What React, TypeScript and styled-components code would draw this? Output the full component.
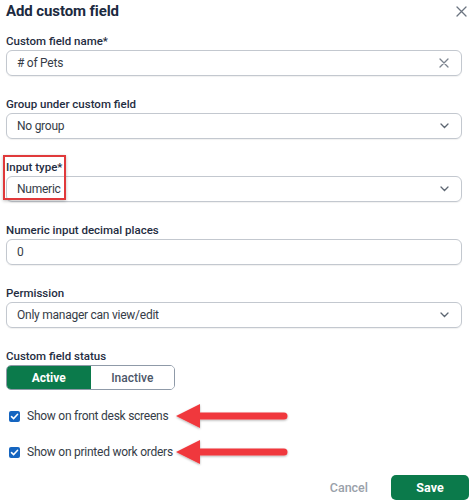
import styled, { createGlobalStyle } from 'styled-components'

const GlobalStyle = createGlobalStyle`
  html, body {
    margin: 0;
    padding: 0;
    background: #ffffff;
  }
  body {
    font-family: Roboto, 'Liberation Sans', sans-serif;
    color: #353c47;
  }
`

const Dialog = styled.div`
  position: relative;
  width: 474px;
  height: 504px;
  box-sizing: border-box;
  padding: 0 5px 0 6px;
  display: flex;
  flex-direction: column;
  overflow: hidden;
`

const Header = styled.div`
  display: flex;
  align-items: center;
  justify-content: space-between;
  height: 22px;
`

const Title = styled.h2`
  margin: 0;
  font-size: 15px;
  font-weight: 700;
  color: #1c2a40;
  line-height: 22px;
  letter-spacing: -0.1px;
`

const CloseButton = styled.button`
  border: 0;
  background: none;
  padding: 0;
  width: 14px;
  height: 14px;
  margin-right: 1px;
  display: flex;
  align-items: center;
  justify-content: center;
`

const Fields = styled.div`
  display: flex;
  flex-direction: column;
  gap: 20px;
  margin-top: 11px;
  margin-right: 7px;
`

const Field = styled.div`
  position: relative;
  display: flex;
  flex-direction: column;
  gap: 1px;
`

const Label = styled.label`
  font-size: 11.5px;
  font-weight: 500;
  line-height: 16px;
  color: #1f2d42;
`

const InputBox = styled.div`
  display: flex;
  align-items: center;
  justify-content: space-between;
  height: 26px;
  box-sizing: border-box;
  padding: 0 12px 0 10px;
  border: 1px solid #c3c8cf;
  border-radius: 6px;
  box-shadow: 0 1px 1px rgba(0, 0, 0, 0.06);
  font-size: 12px;
  letter-spacing: -0.25px;
  color: #353c47;
`

const Highlight = styled.div`
  position: absolute;
  left: -3px;
  top: -4px;
  width: 63px;
  height: 45px;
  box-sizing: border-box;
  border: 2px solid #e0393b;
  box-shadow: 0 1px 3px rgba(0, 0, 0, 0.25);
  pointer-events: none;
`

const Segmented = styled.div`
  display: flex;
  width: 169px;
  height: 25px;
  box-sizing: border-box;
  border: 1px solid #8f9aa8;
  border-radius: 5px;
  overflow: hidden;
`

const Segment = styled.div<{ $active?: boolean }>`
  flex: 1;
  display: flex;
  align-items: center;
  justify-content: center;
  font-size: 12px;
  font-weight: ${(p) => (p.$active ? 700 : 500)};
  color: ${(p) => (p.$active ? '#ffffff' : '#4b5668')};
  background: ${(p) => (p.$active ? '#0b7a4b' : '#ffffff')};
`

const Checks = styled.div`
  display: flex;
  flex-direction: column;
  gap: 16px;
  margin-top: 16px;
`

const CheckRow = styled.div`
  position: relative;
  display: flex;
  align-items: center;
  gap: 7px;
  height: 20px;
  padding-left: 3px;
  font-size: 12px;
  letter-spacing: -0.25px;
  color: #353c47;
`

const CheckBox = styled.span`
  width: 11px;
  height: 11px;
  border-radius: 2px;
  background: #1565c0;
  display: flex;
  align-items: center;
  justify-content: center;
`

const Arrow = styled.svg`
  position: absolute;
  left: 170px;
  top: -5px;
  overflow: visible;
`

const Footer = styled.div`
  display: flex;
  align-items: center;
  justify-content: flex-end;
  gap: 23px;
  margin-top: 13px;
`

const TextButton = styled.button`
  border: 0;
  background: none;
  padding: 0;
  font-family: inherit;
  font-size: 12.5px;
  font-weight: 500;
  color: #9aa1aa;
`

const PrimaryButton = styled.button`
  width: 78px;
  height: 25px;
  border: 0;
  border-radius: 5px;
  background: #0b7a4b;
  color: #ffffff;
  font-family: inherit;
  font-size: 12.5px;
  font-weight: 700;
`

const Clear = () => (
  <svg width="10" height="10" viewBox="0 0 10 10">
    <path d="M1 1 L9 9 M9 1 L1 9" stroke="#7b838e" strokeWidth="1.3" strokeLinecap="round" />
  </svg>
)

const Chevron = () => (
  <svg width="9" height="6" viewBox="0 0 9 6">
    <path d="M1 1 L4.5 4.5 L8 1" fill="none" stroke="#5d6672" strokeWidth="1.3" strokeLinecap="round" />
  </svg>
)

const Check = () => (
  <svg width="9" height="9" viewBox="0 0 9 9">
    <path d="M1.5 4.6 L3.6 6.6 L7.6 2.2" fill="none" stroke="#ffffff" strokeWidth="1.5" strokeLinecap="round" />
  </svg>
)

const RedArrow = () => (
  <Arrow width="116" height="30" viewBox="0 0 116 30">
    <defs>
      <filter id="arrowShadow" x="-10%" y="-30%" width="120%" height="160%">
        <feDropShadow dx="0" dy="1" stdDeviation="1" floodColor="#000" floodOpacity="0.3" />
      </filter>
    </defs>
    <g filter="url(#arrowShadow)" fill="#f0393d">
      <path d="M0 15 L24 3 L24 11.5 L108 11.5 A3.5 3.5 0 0 1 108 18.5 L24 18.5 L24 27 Z" />
    </g>
  </Arrow>
)

type SelectProps = { value: string }

const Select = ({ value }: SelectProps) => (
  <InputBox>
    <span>{value}</span>
    <Chevron />
  </InputBox>
)

const checks = ['Show on front desk screens', 'Show on printed work orders']

export default function App() {
  return (
    <>
      <GlobalStyle />
      <Dialog>
        <Header>
          <Title>Add custom field</Title>
          <CloseButton aria-label="Close">
            <svg width="11" height="11" viewBox="0 0 11 11">
              <path d="M1 1 L10 10 M10 1 L1 10" stroke="#6b7480" strokeWidth="1.3" strokeLinecap="round" />
            </svg>
          </CloseButton>
        </Header>

        <Fields>
          <Field>
            <Label>Custom field name*</Label>
            <InputBox>
              <span># of Pets</span>
              <Clear />
            </InputBox>
          </Field>
          <Field>
            <Label>Group under custom field</Label>
            <Select value="No group" />
          </Field>
          <Field>
            <Label>Input type*</Label>
            <Select value="Numeric" />
            <Highlight />
          </Field>
          <Field>
            <Label>Numeric input decimal places</Label>
            <InputBox>
              <span>0</span>
            </InputBox>
          </Field>
          <Field>
            <Label>Permission</Label>
            <Select value="Only manager can view/edit" />
          </Field>
          <Field>
            <Label>Custom field status</Label>
            <Segmented>
              <Segment $active>Active</Segment>
              <Segment>Inactive</Segment>
            </Segmented>
          </Field>
        </Fields>

        <Checks>
          {checks.map((text) => (
            <CheckRow key={text}>
              <CheckBox>
                <Check />
              </CheckBox>
              <span>{text}</span>
              <RedArrow />
            </CheckRow>
          ))}
        </Checks>

        <Footer>
          <TextButton>Cancel</TextButton>
          <PrimaryButton>Save</PrimaryButton>
        </Footer>
      </Dialog>
    </>
  )
}
